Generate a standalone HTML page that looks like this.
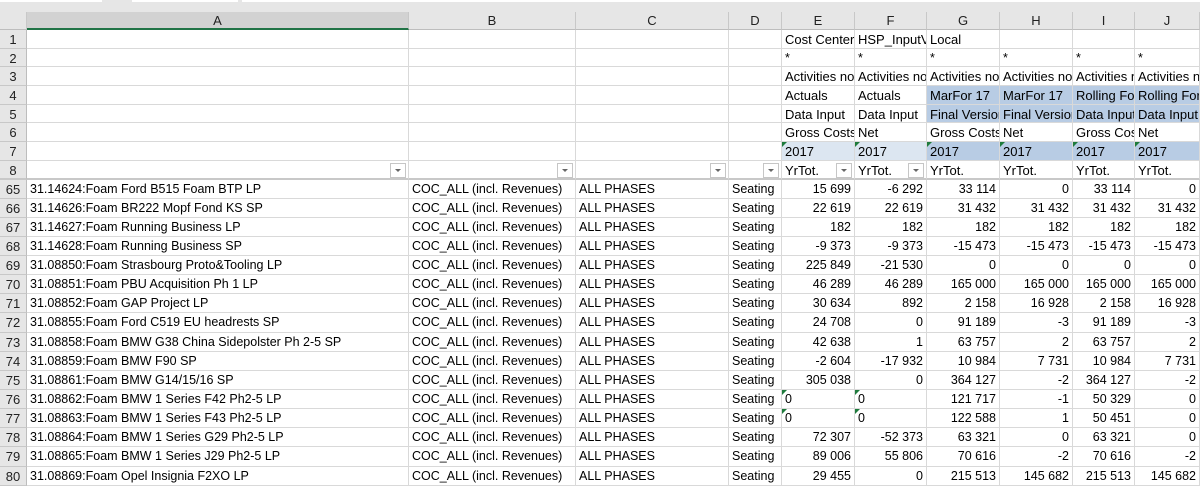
<!DOCTYPE html>
<html><head><meta charset="utf-8"><style>
*{box-sizing:border-box;margin:0;padding:0}
body{width:1200px;height:471px;overflow:hidden;background:#fff;font-family:"Liberation Sans",Arial,sans-serif;position:relative}
.top{position:absolute;left:0;top:0;width:1200px;height:12px;background:#e6e6e6}
.top i{position:absolute;top:0;height:2px;background:#fff}
.g{position:absolute;left:0;top:12px;display:grid;grid-template-columns:27px 382px 167px 153px 53px 73px 72px 73px 73px 62px 65px;grid-template-rows:18px repeat(8,18.7px) repeat(16,19.15px)}
.g div{border-right:1px solid #d9d9d9;border-bottom:1px solid #d9d9d9;font-size:12.5px;line-height:19px;white-space:nowrap;overflow:hidden;padding:0 3px;position:relative;color:#000}
.g .ch{background:#e6e6e6;border-right:1px solid #c8c8c8;border-bottom:1px solid #bdbdbd;text-align:center;font-size:13px;color:#222;line-height:18px}
.g .sel{background:#d2d2d2;border-bottom:2px solid #217346}
.g .rh{background:#e6e6e6;border-right:1px solid #bdbdbd;border-bottom:1px solid #c8c8c8;text-align:center;padding:0;color:#222;font-size:13px}
.g .n{text-align:right}
.g .h{font-size:13px}
.b1{background:#b8cce4}
.b2{background:#dce6f1}
.t::before{content:"";position:absolute;left:0;top:0;border-top:5px solid #1e7b3c;border-right:5px solid transparent}
.dd::after{content:"";position:absolute;right:2px;top:2px;width:14px;height:13px;border:1px solid #c6c6c6;background:#fff}
.dd::before{content:"";position:absolute;right:7px;top:8px;border-top:3px solid #666;border-left:3px solid transparent;border-right:3px solid transparent;z-index:2}
.r8{border-bottom:2px solid #c8c8c8!important}
</style></head><body>
<div class="top"><i style="left:0;width:102px"></i><i style="left:132px;width:106px"></i><i style="left:242px;width:958px"></i></div>
<div class="g">
<div class="ch"></div><div class="ch sel">A</div><div class="ch">B</div><div class="ch">C</div><div class="ch">D</div><div class="ch">E</div><div class="ch">F</div><div class="ch">G</div><div class="ch">H</div><div class="ch">I</div><div class="ch">J</div>

<div class="rh">1</div><div></div><div></div><div></div><div></div><div class="h">Cost Center</div><div class="h">HSP_InputV</div><div class="h">Local</div><div></div><div></div><div></div>
<div class="rh">2</div><div></div><div></div><div></div><div></div><div>*</div><div>*</div><div>*</div><div>*</div><div>*</div><div>*</div>
<div class="rh">3</div><div></div><div></div><div></div><div></div><div class="h">Activities not</div><div class="h">Activities not</div><div class="h">Activities not</div><div class="h">Activities not</div><div class="h">Activities n</div><div class="h">Activities no</div>
<div class="rh">4</div><div></div><div></div><div></div><div></div><div class="h">Actuals</div><div class="h">Actuals</div><div class="b1 h">MarFor 17</div><div class="b1 h">MarFor 17</div><div class="b1 h">Rolling For</div><div class="b1 h">Rolling For</div>
<div class="rh">5</div><div></div><div></div><div></div><div></div><div class="h">Data Input</div><div class="h">Data Input</div><div class="b1 h">Final Version</div><div class="b1 h">Final Version</div><div class="b1 h">Data Input</div><div class="b1 h">Data Input</div>
<div class="rh">6</div><div></div><div></div><div></div><div></div><div class="h">Gross Costs</div><div class="h">Net</div><div class="h">Gross Costs</div><div class="h">Net</div><div class="h">Gross Cos</div><div class="h">Net</div>
<div class="rh">7</div><div></div><div></div><div></div><div></div><div class="b2 t h">2017</div><div class="b2 t h">2017</div><div class="b1 t h">2017</div><div class="b1 t h">2017</div><div class="b1 t h">2017</div><div class="b1 t h">2017</div>
<div class="rh r8">8</div><div class="dd r8"></div><div class="dd r8"></div><div class="dd r8"></div><div class="dd r8"></div><div class="dd r8 h">YrTot.</div><div class="dd r8 h">YrTot.</div><div class="r8 h">YrTot.</div><div class="r8 h">YrTot.</div><div class="r8 h">YrTot.</div><div class="r8 h">YrTot.</div>

<div class="rh">65</div><div>31.14624:Foam Ford B515 Foam BTP LP</div><div>COC_ALL (incl. Revenues)</div><div>ALL PHASES</div><div>Seating</div><div class="n">15 699</div><div class="n">-6 292</div><div class="n">33 114</div><div class="n">0</div><div class="n">33 114</div><div class="n">0</div>
<div class="rh">66</div><div>31.14626:Foam BR222 Mopf Fond KS SP</div><div>COC_ALL (incl. Revenues)</div><div>ALL PHASES</div><div>Seating</div><div class="n">22 619</div><div class="n">22 619</div><div class="n">31 432</div><div class="n">31 432</div><div class="n">31 432</div><div class="n">31 432</div>
<div class="rh">67</div><div>31.14627:Foam Running Business LP</div><div>COC_ALL (incl. Revenues)</div><div>ALL PHASES</div><div>Seating</div><div class="n">182</div><div class="n">182</div><div class="n">182</div><div class="n">182</div><div class="n">182</div><div class="n">182</div>
<div class="rh">68</div><div>31.14628:Foam Running Business SP</div><div>COC_ALL (incl. Revenues)</div><div>ALL PHASES</div><div>Seating</div><div class="n">-9 373</div><div class="n">-9 373</div><div class="n">-15 473</div><div class="n">-15 473</div><div class="n">-15 473</div><div class="n">-15 473</div>
<div class="rh">69</div><div>31.08850:Foam Strasbourg Proto&amp;Tooling LP</div><div>COC_ALL (incl. Revenues)</div><div>ALL PHASES</div><div>Seating</div><div class="n">225 849</div><div class="n">-21 530</div><div class="n">0</div><div class="n">0</div><div class="n">0</div><div class="n">0</div>
<div class="rh">70</div><div>31.08851:Foam PBU Acquisition Ph 1 LP</div><div>COC_ALL (incl. Revenues)</div><div>ALL PHASES</div><div>Seating</div><div class="n">46 289</div><div class="n">46 289</div><div class="n">165 000</div><div class="n">165 000</div><div class="n">165 000</div><div class="n">165 000</div>
<div class="rh">71</div><div>31.08852:Foam GAP Project LP</div><div>COC_ALL (incl. Revenues)</div><div>ALL PHASES</div><div>Seating</div><div class="n">30 634</div><div class="n">892</div><div class="n">2 158</div><div class="n">16 928</div><div class="n">2 158</div><div class="n">16 928</div>
<div class="rh">72</div><div>31.08855:Foam Ford C519 EU headrests SP</div><div>COC_ALL (incl. Revenues)</div><div>ALL PHASES</div><div>Seating</div><div class="n">24 708</div><div class="n">0</div><div class="n">91 189</div><div class="n">-3</div><div class="n">91 189</div><div class="n">-3</div>
<div class="rh">73</div><div>31.08858:Foam BMW G38 China Sidepolster Ph 2-5 SP</div><div>COC_ALL (incl. Revenues)</div><div>ALL PHASES</div><div>Seating</div><div class="n">42 638</div><div class="n">1</div><div class="n">63 757</div><div class="n">2</div><div class="n">63 757</div><div class="n">2</div>
<div class="rh">74</div><div>31.08859:Foam BMW F90 SP</div><div>COC_ALL (incl. Revenues)</div><div>ALL PHASES</div><div>Seating</div><div class="n">-2 604</div><div class="n">-17 932</div><div class="n">10 984</div><div class="n">7 731</div><div class="n">10 984</div><div class="n">7 731</div>
<div class="rh">75</div><div>31.08861:Foam BMW G14/15/16 SP</div><div>COC_ALL (incl. Revenues)</div><div>ALL PHASES</div><div>Seating</div><div class="n">305 038</div><div class="n">0</div><div class="n">364 127</div><div class="n">-2</div><div class="n">364 127</div><div class="n">-2</div>
<div class="rh">76</div><div>31.08862:Foam BMW 1 Series F42 Ph2-5 LP</div><div>COC_ALL (incl. Revenues)</div><div>ALL PHASES</div><div>Seating</div><div class="t">0</div><div class="t">0</div><div class="n">121 717</div><div class="n">-1</div><div class="n">50 329</div><div class="n">0</div>
<div class="rh">77</div><div>31.08863:Foam BMW 1 Series F43 Ph2-5 LP</div><div>COC_ALL (incl. Revenues)</div><div>ALL PHASES</div><div>Seating</div><div class="t">0</div><div class="t">0</div><div class="n">122 588</div><div class="n">1</div><div class="n">50 451</div><div class="n">0</div>
<div class="rh">78</div><div>31.08864:Foam BMW 1 Series G29 Ph2-5 LP</div><div>COC_ALL (incl. Revenues)</div><div>ALL PHASES</div><div>Seating</div><div class="n">72 307</div><div class="n">-52 373</div><div class="n">63 321</div><div class="n">0</div><div class="n">63 321</div><div class="n">0</div>
<div class="rh">79</div><div>31.08865:Foam BMW 1 Series J29 Ph2-5 LP</div><div>COC_ALL (incl. Revenues)</div><div>ALL PHASES</div><div>Seating</div><div class="n">89 006</div><div class="n">55 806</div><div class="n">70 616</div><div class="n">-2</div><div class="n">70 616</div><div class="n">-2</div>
<div class="rh">80</div><div>31.08869:Foam Opel Insignia F2XO LP</div><div>COC_ALL (incl. Revenues)</div><div>ALL PHASES</div><div>Seating</div><div class="n">29 455</div><div class="n">0</div><div class="n">215 513</div><div class="n">145 682</div><div class="n">215 513</div><div class="n">145 682</div>
</div>
</body></html>
